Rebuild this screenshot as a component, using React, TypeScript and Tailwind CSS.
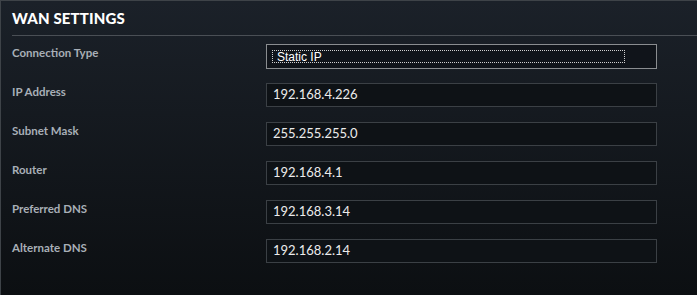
import React from 'react';

const rows = [
  { label: 'IP Address', value: '192.168.4.226' },
  { label: 'Subnet Mask', value: '255.255.255.0' },
  { label: 'Router', value: '192.168.4.1' },
  { label: 'Preferred DNS', value: '192.168.3.14' },
  { label: 'Alternate DNS', value: '192.168.2.14' },
];

export default function App() {
  return (
    <div
      className="w-[697px] h-[295px] overflow-hidden border-t border-l border-[#3e4348] bg-gradient-to-b from-[#1b2129] to-[#0c0f12]"
      style={{ fontFamily: 'Lato, "Open Sans", sans-serif' }}
    >
      {/* Header */}
      <div className="ml-[11px] h-[35px] border-b border-[#4a4f55] flex items-center">
        <h1 className="text-[15px] font-black tracking-[0.01em] text-white leading-none pt-[1px]">
          WAN SETTINGS
        </h1>
      </div>

      <div className="ml-[11px] pt-[8px]">
        {/* Connection type (select) */}
        <div className="flex items-start h-[39px]">
          <span className="w-[254px] pt-[1px] text-[11.5px] font-bold text-[#a8afb7] leading-[16px]">Connection Type</span>
          <div className="w-[391px] h-[25px] border border-[#8a8d90] bg-[#10141a] p-[5px] pr-[31px]">
            <div
              className="h-full border border-dotted border-[#d0d0d0] flex items-center pl-[4px] text-[12px] text-white"
              style={{ fontFamily: '"Liberation Sans", Arial, sans-serif' }}
            >
              Static IP
            </div>
          </div>
        </div>

        {rows.map(r => (
          <div key={r.label} className="flex items-start h-[39px]">
            <span className="w-[254px] pt-[1px] text-[11.5px] font-bold text-[#a8afb7] leading-[16px]">{r.label}</span>
            <div className="w-[391px] h-[24px] border border-[#3b4045] bg-[#0e1216] flex items-center pl-[6px] text-[13px] text-[#ececec]">
              {r.value}
            </div>
          </div>
        ))}
      </div>
    </div>
  );
}
